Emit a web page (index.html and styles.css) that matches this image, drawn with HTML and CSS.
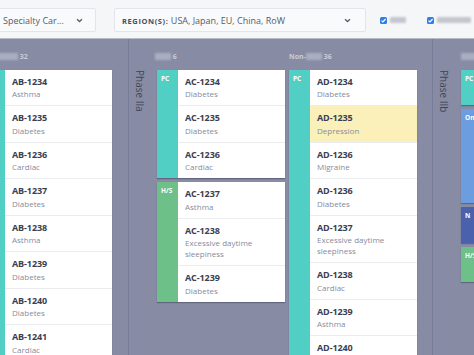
FILE: index.html
```html
<!DOCTYPE html>
<html lang="en">
<head>
<meta charset="utf-8">
<title>Pipeline board</title>
<link rel="stylesheet" href="styles.css">
</head>
<body>
<header class="toolbar">
  <div class="select select--product">
    <span class="select__value">Specialty Car...</span>
    <svg class="chevron" width="7" height="5" viewBox="0 0 7 5"><path d="M1 1.2 L3.5 3.6 L6 1.2" fill="none" stroke="#5c6170" stroke-width="1.4"/></svg>
  </div>
  <div class="select select--region">
    <span class="select__value"><b class="select__key">REGION(S):</b> USA, Japan, EU, China, RoW</span>
    <svg class="chevron" width="7" height="5" viewBox="0 0 7 5"><path d="M1 1.2 L3.5 3.6 L6 1.2" fill="none" stroke="#5c6170" stroke-width="1.4"/></svg>
  </div>
  <label class="check">
    <span class="check__box"><svg width="7" height="7" viewBox="0 0 7 7"><path d="M1.5 3.6 L2.9 5 L5.6 2" fill="none" stroke="#fff" stroke-width="1.2"/></svg></span>
    <span class="blur blur--a"></span>
  </label>
  <label class="check check--second">
    <span class="check__box"><svg width="7" height="7" viewBox="0 0 7 7"><path d="M1.5 3.6 L2.9 5 L5.6 2" fill="none" stroke="#fff" stroke-width="1.2"/></svg></span>
    <span class="blur blur--b"></span>
  </label>
</header>

<main class="board">
  <section class="phase phase--clipped">
    <div class="column">
      <div class="column__head"><span class="redact redact--w34"></span> 32</div>
      <div class="card">
        <div class="card__tag tag--teal"></div>
        <div class="card__rows">
          <div class="row"><div class="row__id">AB-1234</div><div class="row__desc">Asthma</div></div>
          <div class="row"><div class="row__id">AB-1235</div><div class="row__desc">Diabetes</div></div>
          <div class="row"><div class="row__id">AB-1236</div><div class="row__desc">Cardiac</div></div>
          <div class="row"><div class="row__id">AB-1237</div><div class="row__desc">Diabetes</div></div>
          <div class="row"><div class="row__id">AB-1238</div><div class="row__desc">Asthma</div></div>
          <div class="row"><div class="row__id">AB-1239</div><div class="row__desc">Diabetes</div></div>
          <div class="row"><div class="row__id">AB-1240</div><div class="row__desc">Diabetes</div></div>
          <div class="row"><div class="row__id">AB-1241</div><div class="row__desc">Cardiac</div></div>
        </div>
      </div>
    </div>
  </section>

  <section class="phase">
    <div class="phase__label"><span>Phase IIa</span></div>
    <div class="column">
      <div class="column__head column__head--shift"><span class="redact redact--w16"></span> 6</div>
      <div class="card">
        <div class="card__tag tag--teal">PC</div>
        <div class="card__rows">
          <div class="row"><div class="row__id">AC-1234</div><div class="row__desc">Diabetes</div></div>
          <div class="row"><div class="row__id">AC-1235</div><div class="row__desc">Diabetes</div></div>
          <div class="row"><div class="row__id">AC-1236</div><div class="row__desc">Cardiac</div></div>
        </div>
      </div>
      <div class="card">
        <div class="card__tag tag--green">H/S</div>
        <div class="card__rows">
          <div class="row"><div class="row__id">AC-1237</div><div class="row__desc">Asthma</div></div>
          <div class="row"><div class="row__id">AC-1238</div><div class="row__desc">Excessive daytime sleepiness</div></div>
          <div class="row"><div class="row__id">AC-1239</div><div class="row__desc">Diabetes</div></div>
        </div>
      </div>
    </div>
    <div class="column">
      <div class="column__head">Non-<span class="redact redact--w16"></span> 36</div>
      <div class="card">
        <div class="card__tag tag--teal">PC</div>
        <div class="card__rows">
          <div class="row"><div class="row__id">AD-1234</div><div class="row__desc">Diabetes</div></div>
          <div class="row row--highlight"><div class="row__id">AD-1235</div><div class="row__desc">Depression</div></div>
          <div class="row"><div class="row__id">AD-1236</div><div class="row__desc">Migraine</div></div>
          <div class="row"><div class="row__id">AD-1236</div><div class="row__desc">Diabetes</div></div>
          <div class="row"><div class="row__id">AD-1237</div><div class="row__desc">Excessive daytime sleepiness</div></div>
          <div class="row"><div class="row__id">AD-1238</div><div class="row__desc">Cardiac</div></div>
          <div class="row"><div class="row__id">AD-1239</div><div class="row__desc">Asthma</div></div>
          <div class="row"><div class="row__id">AD-1240</div><div class="row__desc">Diabetes</div></div>
        </div>
      </div>
    </div>
  </section>

  <section class="phase">
    <div class="phase__label"><span>Phase IIb</span></div>
    <div class="column">
      <div class="column__head"><span class="redact redact--w34"></span></div>
      <div class="card">
        <div class="card__tag tag--teal">PC</div>
        <div class="card__rows">
          <div class="row"><div class="row__id">AE-1234</div><div class="row__desc">Diabetes</div></div>
        </div>
      </div>
      <div class="card">
        <div class="card__tag tag--blue">Onc</div>
        <div class="card__rows">
          <div class="row"><div class="row__id">AE-1235</div><div class="row__desc">Breast cancer</div></div>
          <div class="row"><div class="row__id">AE-1236</div><div class="row__desc">Metastatic<br>colorectal<br>cancer</div></div>
        </div>
      </div>
      <div class="card">
        <div class="card__tag tag--navy">N</div>
        <div class="card__rows">
          <div class="row"><div class="row__id">AE-1237</div><div class="row__desc">Migraine</div></div>
        </div>
      </div>
      <div class="card">
        <div class="card__tag tag--green">H/S</div>
        <div class="card__rows">
          <div class="row"><div class="row__id">AE-1238</div><div class="row__desc">Asthma</div></div>
        </div>
      </div>
    </div>
  </section>
</main>
</body>
</html>
```

FILE: styles.css
```css
* {
  box-sizing: border-box;
  margin: 0;
  padding: 0;
}

html,
body {
  width: 474px;
  height: 355px;
  overflow: hidden;
}

body {
  font-family: "Open Sans", "Noto Sans", sans-serif;
  background: #878ca4;
  color: #3b4050;
}

/* ---------- toolbar ---------- */
.toolbar {
  height: 39px;
  background: #f5f6f8;
  border-bottom: 1px solid #b7bbc8;
  display: flex;
  align-items: flex-start;
  padding-top: 8px;
  white-space: nowrap;
}

.select {
  height: 24px;
  border: 1px solid #e3e5ea;
  background: #f9fafb;
  border-radius: 2px;
  display: flex;
  align-items: center;
  justify-content: space-between;
  font-size: 9px;
  color: #565b6a;
}

.select--product {
  width: 103px;
  margin-left: -7px;
  padding: 0 12px 0 9px;
}

.select--region {
  width: 252px;
  margin-left: 18px;
  padding: 0 14px 0 7px;
}

.select__key {
  font-weight: 700;
  font-size: 7.5px;
  letter-spacing: 0.6px;
  color: #4a4f5e;
}

.chevron {
  display: block;
}

.check {
  height: 24px;
  display: flex;
  align-items: center;
  gap: 3px;
  margin-left: 14px;
}

.check--second {
  margin-left: 21px;
}

.check__box {
  width: 7px;
  height: 7px;
  border-radius: 1.5px;
  background: #2f7fe4;
  display: flex;
}

.blur {
  height: 6px;
  background: #c3c6ce;
  filter: blur(1px);
  border-radius: 1px;
}

.blur--a {
  width: 16px;
}

.blur--b {
  width: 34px;
}

/* ---------- board ---------- */
.board {
  display: flex;
  height: 316px;
  align-items: stretch;
}

.phase {
  display: flex;
  flex: none;
  border-left: 1px solid #777d96;
  padding-right: 15px;
}

.phase--clipped {
  border-left: 0;
  margin-left: -16px;
  padding-right: 16px;
}

.phase__label {
  width: 28px;
  flex: none;
  padding: 31px 0 0 4px;
}

.phase__label span {
  display: block;
  writing-mode: vertical-rl;
  font-size: 10px;
  line-height: 14px;
  color: #3f4557;
}

.column {
  width: 128px;
  flex: none;
  display: flex;
  flex-direction: column;
  gap: 4px;
}

.column > * {
  flex: none;
}

.column + .column {
  margin-left: 4px;
}

.column__head {
  height: 27px;
  padding-top: 13px;
  font-size: 7px;
  line-height: 9px;
  font-weight: 700;
  color: #c9ccd9;
  white-space: nowrap;
}

.column__head--shift {
  margin-left: -2px;
}

.redact {
  display: inline-block;
  height: 7px;
  vertical-align: -1px;
  background: #a9aec0;
  filter: blur(0.8px);
}

.redact--w16 {
  width: 16px;
}

.redact--w34 {
  width: 34px;
}

/* ---------- cards ---------- */
.card {
  display: flex;
  background: #fff;
  box-shadow: 0 1px 1px rgba(50, 55, 80, 0.45);
}

.card__tag {
  width: 21px;
  flex: none;
  padding: 5px 0 0 4px;
  font-size: 6.5px;
  line-height: 8px;
  font-weight: 700;
  color: #fff;
  white-space: nowrap;
  overflow: hidden;
}

.tag--teal {
  background: #52cfc4;
}

.tag--green {
  background: #6cc088;
}

.tag--blue {
  background: #6b9de0;
}

.tag--navy {
  background: #4a61ad;
}

.card__rows {
  flex: 1;
  min-width: 0;
}

.row {
  padding: 6px 6px 6.2px 7px;
  border-top: 1px solid #ebecef;
}

.row:first-child {
  border-top: 0;
}

.row--highlight {
  background: #fcf0ba;
}

.row__id {
  font-size: 9px;
  line-height: 12.3px;
  font-weight: 700;
  letter-spacing: -0.1px;
  color: #3b4050;
}

.row__desc {
  font-size: 8px;
  line-height: 11px;
  color: #868b9b;
}
```
